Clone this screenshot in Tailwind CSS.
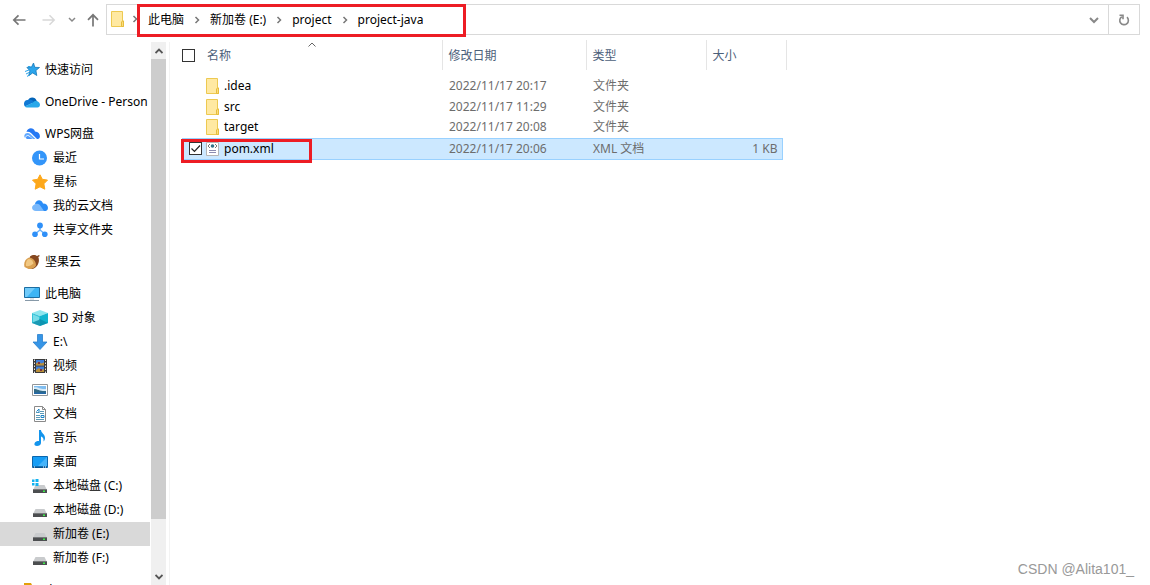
<!DOCTYPE html>
<html lang="zh-CN">
<head>
    <meta charset="UTF-8">
    <meta name="viewport" content="width=device-width, initial-scale=1.0">
    <title>project-java</title>
    <script src="https://cdn.jsdelivr.net/npm/@tailwindcss/browser@4"></script>
</head>
<body class="relative flex h-screen flex-col overflow-hidden bg-white font-['Noto_Sans','Noto_Sans_CJK_SC',sans-serif] text-xs text-black">

    <!-- shared icons -->
    <svg class="hidden">
        <symbol id="folder" viewBox="0 0 14 16">
            <path d="M.5.5h11v9.5h1v5.5H.5z" fill="#ffe9a2" stroke="#edc951"/>
            <path d="M10.500 15.500v-4.500l1-1h1v5.500z" fill="#fbdc7e" stroke="#e6bd3c"/>
        </symbol>
        <symbol id="drive" viewBox="0 0 16 16">
            <path d="M3.500 7h9l2 4h-13z" fill="#c9cbcd"/>
            <path d="M1 11h14v4H1z" fill="#4c4e50"/>
            <path d="M1 11h14v1H1z" fill="#77797b"/>
            <path d="M11 12.500h2v1.500h-2z" fill="#3df04a"/>
        </symbol>
        <symbol id="chevron" viewBox="0 0 8 8">
            <path d="M2.500 1L5.500 4l-3 3" fill="none" stroke="#777" stroke-width="1.500"/>
        </symbol>
    </svg>

    <header class="flex h-10 shrink-0 items-start pt-1 pr-2.5 pl-3">
        <div class="flex h-8 w-[94px] shrink-0 items-center">
            <button type="button" aria-label="后退">
                <svg class="size-3.5" viewBox="0 0 14 14" fill="none" stroke="#777" stroke-width="1.700"><path d="M13.500 7H2M6.500 2.300L1.800 7l4.700 4.700"/></svg>
            </button>
            <button type="button" aria-label="前进" class="ml-4">
                <svg class="size-3.5" viewBox="0 0 14 14" fill="none" stroke="#d8d8d8" stroke-width="1.500"><path d="M.5 7H12M7.500 2.300L12.200 7l-4.700 4.700"/></svg>
            </button>
            <button type="button" aria-label="最近浏览的位置" class="ml-3">
                <svg class="size-2" viewBox="0 0 8 8" fill="none" stroke="#888" stroke-width="1.500"><path d="M1 2l3 3 3-3"/></svg>
            </button>
            <button type="button" aria-label="上移" class="ml-2.5">
                <svg class="size-3.5" viewBox="0 0 14 14" fill="none" stroke="#777" stroke-width="1.700"><path d="M7 13.500V2M2 6.800L7 1.800l5 5"/></svg>
            </button>
        </div>
        <div class="flex h-[31px] grow items-stretch border border-[#d9d9d9]">
            <svg class="mt-1.5 ml-1 h-4 w-3.5 shrink-0"><use href="#folder"/></svg>
            <svg class="mt-2.5 ml-1.5 size-2 shrink-0"><use href="#chevron"/></svg>
            <nav aria-label="地址" class="relative -ml-0.5 w-[329px]">
                <ol class="flex h-[29px] items-center gap-[9px] pl-[11px]">
                    <li><a href="#">此电脑</a></li>
                    <li><svg class="size-2"><use href="#chevron"/></svg></li>
                    <li><a href="#">新加卷 (E:)</a></li>
                    <li><svg class="size-2"><use href="#chevron"/></svg></li>
                    <li><a href="#">project</a></li>
                    <li><svg class="size-2"><use href="#chevron"/></svg></li>
                    <li><a href="#">project-java</a></li>
                </ol>
                <div class="pointer-events-none absolute inset-x-0 -top-px h-[33px] border-3 border-[#ed1c24]"></div>
            </nav>
            <button type="button" aria-label="以前的位置" class="ml-auto flex w-7 items-center justify-center">
                <svg class="size-2.5" viewBox="0 0 10 10" fill="none" stroke="#888" stroke-width="2"><path d="M1 3l4 4 4-4"/></svg>
            </button>
            <button type="button" aria-label="刷新" class="flex w-[31px] items-center justify-center border-l border-[#d9d9d9]">
                <svg class="size-3" viewBox="0 0 12 12" fill="none" stroke="#888" stroke-width="1.600"><path d="M9 3.200A4.300 4.300 0 1 1 3.800 2.700M1.500 1.300H5v4"/></svg>
            </button>
        </div>
    </header>

    <div class="flex min-h-0 grow">
        <nav aria-label="导航窗格" class="mt-0.5 w-[150px] shrink-0 overflow-hidden pt-4 whitespace-nowrap">
            <a href="#" class="flex h-6 items-center gap-[5px] pl-6">
                <svg class="size-4 shrink-0" viewBox="0 0 16 16"><path d="M9.500 1l1.300 4.300 4.700.2-3.600 3 .9 5-4.100-2.600-4 2.900 1.200-5-3-3.400 4.600-.3z" fill="#2ba5ec" stroke="#1777b8" stroke-width=".8"/><path d="M1 9.500l4-1.500M2 12l3-1.500M3 14.500l2-1.500M4 4.500h2.500" stroke="#2ba5ec"/></svg>
                快速访问
            </a>
            <a href="#" class="mt-2 flex h-6 items-center gap-[5px] pl-6">
                <svg class="size-4 shrink-0" viewBox="0 0 16 16"><path d="M4 6.500a4.500 4.500 0 0 1 8.500 0L14 9H4z" fill="#0364b8"/><path d="M3.500 6C0 6-1 10.500 1 12.500L10 8.300A5 5 0 0 0 3.500 6z" fill="#0f78d4"/><path d="M9 8.500c2-2.500 6.500-1.500 7 2 0 2-1 3-2.500 3H3c-1 0-1.700-.4-2.200-1z" fill="#28a8ea"/></svg>
                OneDrive - Person
            </a>
            <a href="#" class="mt-2 flex h-6 items-center gap-[5px] pl-6">
                <svg class="size-4 shrink-0" viewBox="0 0 16 16"><path d="M2.500 6C3.500 1.500 9.500 1 11 5.500c4 .2 5.500 3.500 4.700 6-.5 1-1.500 1.500-2.700 1.500L7 7C5.500 5.800 4 5.500 2.500 6z" fill="#2478f4"/><path d="M.5 9c.7-2.500 4-2.700 5.700-1l5.300 5H9L5 9.500c-2-1-4 .5-3.500 2.500C.3 11.500 0 10 .5 9z" fill="#62aaff"/><path d="M3.500 10c1.200-.2 2 .5 5 3H3.500c-2 0-2-2.700 0-3z" fill="#4c98fb"/></svg>
                WPS网盘
            </a>
            <a href="#" class="flex h-6 items-center gap-[5px] pl-8">
                <svg class="size-4 shrink-0" viewBox="0 0 16 16"><circle cx="7.500" cy="8" r="7.500" fill="#3395f9"/><path d="M7.500 4v5H12" fill="none" stroke="#fff" stroke-width="1.200"/></svg>
                最近
            </a>
            <a href="#" class="flex h-6 items-center gap-[5px] pl-8">
                <svg class="size-4 shrink-0" viewBox="0 0 16 16"><path d="M8 .8l2.300 4.500 5.200.8-3.600 3.700.9 5.400L8 12.800l-4.800 2.400.9-5.400L.5 6.100l5.200-.8z" fill="#fda81b" stroke="#fda81b" stroke-linejoin="round"/></svg>
                星标
            </a>
            <a href="#" class="flex h-6 items-center gap-[5px] pl-8">
                <svg class="size-4 shrink-0" viewBox="0 0 16 16"><path d="M3 6C4 1.500 9.500 1 11 5.500c4 0 5.500 3 4.800 5.500-.5 1.500-1.500 2-2.800 2h-2z" fill="#2b8df7"/><path d="M4 6c2-.5 3.500.5 4.500 2l3.500 5H4C-1 13-1.500 7 4 6z" fill="#79b8fb"/></svg>
                我的云文档
            </a>
            <a href="#" class="flex h-6 items-center gap-[5px] pl-8">
                <svg class="size-4 shrink-0" viewBox="0 0 16 16" fill="#2f90f8"><path d="M8 4v4l-5 4M8 8l5 4" fill="none" stroke="#67b0fa" stroke-width="1.500"/><circle cx="8" cy="3.500" r="2.900"/><circle cx="3" cy="12.200" r="2.800"/><circle cx="12.800" cy="12.200" r="2.800"/></svg>
                共享文件夹
            </a>
            <a href="#" class="mt-2 flex h-6 items-center gap-[5px] pl-6">
                <svg class="size-4 shrink-0" viewBox="0 0 16 16"><path d="M6 2.500c3-2.500 6-1.500 7-.5l2-1 .8 1-1.500 1c2 5-1 10.500-5.800 12L4 14z" fill="#85471f"/><path d="M5 3.500c4 .5 7 3.500 7 8-1.500 2.500-4 4-7.500 3.500L.5 13c-1-4 .5-8 4.500-9.500z" fill="#d99f50"/><path d="M4.500 5C7 5 9 7 9.500 9.500c-2 2-5 3-7.500 2.500C1.500 9 2.500 6 4.500 5z" fill="#f1c883"/></svg>
                坚果云
            </a>
            <a href="#" class="mt-2 flex h-6 items-center gap-[5px] pl-6">
                <svg class="size-4 shrink-0" viewBox="0 0 16 16"><path d="M.5 1.500h15v10H.5z" fill="#3cb4f4" stroke="#1c6da1"/><path d="M1 2h10L3 11H1z" fill="#71cbfa"/><path d="M6 12h4v2H6z" fill="#dde3e7"/><path d="M1 14.500h14" stroke="#8799a8"/></svg>
                此电脑
            </a>
            <a href="#" class="flex h-6 items-center gap-[5px] pl-8">
                <svg class="size-4 shrink-0" viewBox="0 0 16 16"><path d="M0 3l8-3 8 3-8 3z" fill="#8ee6ee"/><path d="M0 3l8 3v10l-8-3z" fill="#35c3d8"/><path d="M16 3L8 6v10l8-3z" fill="#12b5cf"/><path d="M0 13l8-4 8 4-8 3z" fill="#087f9d" fill-opacity=".6"/><path d="M1 4.500l6 2.500v3L1 12z" fill="#a4edf3" fill-opacity=".6"/></svg>
                3D 对象
            </a>
            <a href="#" class="flex h-6 items-center gap-[5px] pl-8">
                <svg class="size-4 shrink-0" viewBox="0 0 16 16"><path d="M5.500.5h5V8h4.500L8 15.500 1 8h4.500z" fill="#3695e6" stroke="#2980cd" stroke-width=".8"/></svg>
                E:\
            </a>
            <a href="#" class="flex h-6 items-center gap-[5px] pl-8">
                <svg class="size-4 shrink-0" viewBox="0 0 16 16"><path d="M1 1h14v14H1z" fill="#3a3a3a"/><path d="M2.500 1.500v14M13.500 1.500v14" stroke="#e8e8e8" stroke-width="1" stroke-dasharray="1.500 1.500"/><path d="M4 2h8v5.500H4zM4 8.500h8V14H4z" fill="#3f7fdc"/><path d="M4 5.500l3-2 2 2 3-1v3H4zM4 12l3-2 2 2 3-1v3H4z" fill="#b98f3a"/><path d="M6 4h2v2H6zM8 11h2v2H8z" fill="#7c3340"/></svg>
                视频
            </a>
            <a href="#" class="flex h-6 items-center gap-[5px] pl-8">
                <svg class="size-4 shrink-0" viewBox="0 0 16 16"><path d="M.5 2.500h15v11H.5z" fill="#fff" stroke="#929699"/><path d="M2 4h12v8H2z" fill="#7fbdf0"/><path d="M2 5.500c4-1 5 2 12 1.500V10H2z" fill="#d7ebf8"/><path d="M2 7c4 0 6 2.500 12 2v3H2z" fill="#326a86"/><path d="M2 10.500h12V12H2z" fill="#2368a8"/></svg>
                图片
            </a>
            <a href="#" class="flex h-6 items-center gap-[5px] pl-8">
                <svg class="size-4 shrink-0" viewBox="0 0 16 16"><path d="M2.500.5h8l3 3v12h-11z" fill="#fff" stroke="#8a8a8a"/><path d="M10.500.5v3h3" fill="none" stroke="#8a8a8a"/><path d="M4 6.500h3M8 5.500h4M8 7.500h4M4 9.500h4M4 11.500h4M4 13.500h8" stroke="#5a9ab8"/><path d="M4.500 5.500L7 3v4M9 9.500h3v2H9z" fill="none" stroke="#1b83c5"/></svg>
                文档
            </a>
            <a href="#" class="flex h-6 items-center gap-[5px] pl-8">
                <svg class="size-4 shrink-0" viewBox="0 0 16 16"><path d="M7 0h2c0 3 4 4 4 8 0 1.500-.5 2.500-1.500 3.500C12 8 10.500 7 9 6.500V13c0 2-2 3-4 3s-3-1-2.500-2.500C3 11.500 5 11 7 11z" fill="#1394ec"/></svg>
                音乐
            </a>
            <a href="#" class="flex h-6 items-center gap-[5px] pl-8">
                <svg class="size-4 shrink-0" viewBox="0 0 16 16"><path d="M.5 2.500h15v11H.5z" fill="#169df5" stroke="#0b66ad"/><path d="M15 3v9H6z" fill="#46b4fa"/><path d="M1 13h14" stroke="#073f70"/><path d="M2 13h1M11 13h1M13 13h1" stroke="#fff"/></svg>
                桌面
            </a>
            <a href="#" class="flex h-6 items-center gap-[5px] pl-8">
                <svg class="size-4 shrink-0" viewBox="0 0 16 16"><use href="#drive"/><path d="M0 1.500h2.500V4H0zM3.500 1H6.500v3h-3zM0 5h2.500v2.500H0zM3.500 5H6.500v3h-3z" fill="#12b2f0"/></svg>
                本地磁盘 (C:)
            </a>
            <a href="#" class="flex h-6 items-center gap-[5px] pl-8">
                <svg class="size-4 shrink-0"><use href="#drive"/></svg>
                本地磁盘 (D:)
            </a>
            <a href="#" aria-current="true" class="flex h-6 items-center gap-[5px] bg-[#d9d9d9] pl-8">
                <svg class="size-4 shrink-0"><use href="#drive"/></svg>
                新加卷 (E:)
            </a>
            <a href="#" class="flex h-6 items-center gap-[5px] pl-8">
                <svg class="size-4 shrink-0"><use href="#drive"/></svg>
                新加卷 (F:)
            </a>
            <a href="#" class="mt-2 flex h-6 items-center gap-[5px] pl-6">
                <svg class="size-4 shrink-0" viewBox="0 0 16 16"><path d="M0 1h7l1 2h8v12H0z" fill="#e3a008"/></svg>
                docs
            </a>
        </nav>

        <!-- sidebar scrollbar -->
        <div class="mt-0.5 ml-px flex w-[15px] shrink-0 flex-col bg-[#f0f0f0]">
            <button type="button" aria-label="向上滚动" class="flex h-[17px] items-center justify-center">
                <svg class="size-2" viewBox="0 0 8 8" fill="none" stroke="#555" stroke-width="1.800"><path d="M.5 6L4 2.500 7.500 6"/></svg>
            </button>
            <div class="h-[460px] bg-[#cdcdcd]"></div>
            <button type="button" aria-label="向下滚动" class="mt-auto flex h-[17px] items-center justify-center">
                <svg class="size-2" viewBox="0 0 8 8" fill="none" stroke="#555" stroke-width="1.800"><path d="M.5 2L4 5.500 7.500 2"/></svg>
            </button>
        </div>

        <main class="mt-0.5 ml-[3px] grow border-l border-[#f3f3f3] pl-3">
            <table class="-mt-0.5 w-[604px] table-fixed border-collapse text-left">
                <colgroup>
                    <col class="w-[260px]">
                    <col class="w-36">
                    <col class="w-30">
                    <col class="w-[76px]">
                    <col class="w-1">
                </colgroup>
                <thead>
                    <tr class="h-[30px] text-[#4c607a]">
                        <th scope="col" class="relative p-0 font-normal">
                            <svg class="absolute top-0.5 left-1/2 h-1.5 w-2 -translate-x-1/2" viewBox="0 0 8 6" fill="none" stroke="#666"><path d="M.5 4.500L4 1l3.500 3.500"/></svg>
                            <label class="flex items-center gap-3">
                                <input type="checkbox" class="size-[13px] appearance-none border border-[#333] bg-white">
                                <span class="pt-0.5">名称</span>
                            </label>
                        </th>
                        <th scope="col" class="border-l border-[#e5e5e5] p-0 pt-0.5 pl-1.5 font-normal">修改日期</th>
                        <th scope="col" class="border-l border-[#e5e5e5] p-0 pt-0.5 pl-1.5 font-normal">类型</th>
                        <th scope="col" class="border-l border-[#e5e5e5] p-0 pt-0.5 pl-1.5 font-normal">大小</th>
                        <td class="border-r border-[#e5e5e5] p-0"></td>
                    </tr>
                </thead>
                <tbody class="text-[#6d6d6d]">
                    <tr class="h-[5px]"><td colspan="5" class="p-0"></td></tr>
                    <tr class="h-[21px]">
                        <td class="p-0 pl-6 text-black"><a href="#" class="flex items-center gap-1"><svg class="h-4 w-3.5"><use href="#folder"/></svg>.idea</a></td>
                        <td class="p-0 pl-[7px]">2022/11/17 20:17</td>
                        <td class="p-0 pl-[7px]">文件夹</td>
                        <td class="p-0"></td>
                    </tr>
                    <tr class="h-[21px]">
                        <td class="p-0 pl-6 text-black"><a href="#" class="flex items-center gap-1"><svg class="h-4 w-3.5"><use href="#folder"/></svg>src</a></td>
                        <td class="p-0 pl-[7px]">2022/11/17 11:29</td>
                        <td class="p-0 pl-[7px]">文件夹</td>
                        <td class="p-0"></td>
                    </tr>
                    <tr class="h-[21px]">
                        <td class="p-0 pl-6 text-black"><a href="#" class="flex items-center gap-1"><svg class="h-4 w-3.5"><use href="#folder"/></svg>target</a></td>
                        <td class="p-0 pl-[7px]">2022/11/17 20:08</td>
                        <td class="p-0 pl-[7px]">文件夹</td>
                        <td class="p-0"></td>
                    </tr>
                    <tr class="h-[21px]">
                        <td class="relative border-y border-[#99d1ff] bg-[#cce8ff] p-0 pl-[7px] text-black">
                            <div class="flex items-center">
                                <span class="relative flex">
                                    <input type="checkbox" checked aria-label="选择 pom.xml" class="size-[13px] appearance-none border border-[#333] bg-white">
                                    <svg class="pointer-events-none absolute inset-0 size-[13px]" viewBox="0 0 13 13" fill="none" stroke="#222" stroke-width="1.200"><path d="M2.500 6.500l3 3 5.500-6"/></svg>
                                </span>
                                <a href="#" class="ml-1 flex items-center gap-1">
                                    <svg class="h-4 w-3.5" viewBox="0 0 14 16"><path d="M.5 1.500h12v13H.5z" fill="#fff" stroke="#b5b5b5"/><path d="M4 3L2 5l2 2M9 3l2 2-2 2" fill="none" stroke="#777"/><circle cx="6.500" cy="5" r="1.800" fill="#2f7187"/><path d="M3 9.500h7M3 11.500h7" stroke="#8c8cb0"/></svg>
                                    pom.xml
                                </a>
                            </div>
                            <div class="pointer-events-none absolute top-0 -left-px h-6 w-[131px] border-3 border-[#ed1c24]"></div>
                        </td>
                        <td class="border-y border-[#99d1ff] bg-[#cce8ff] p-0 pl-[7px]">2022/11/17 20:06</td>
                        <td class="border-y border-[#99d1ff] bg-[#cce8ff] p-0 pl-[7px]">XML 文档</td>
                        <td class="border-y border-r border-[#99d1ff] bg-[#cce8ff] p-0 pr-1 text-right">1 KB</td>
                    </tr>
                </tbody>
            </table>
        </main>
    </div>

    <p class="absolute right-4 bottom-1.5 font-['Liberation_Sans',sans-serif] text-sm text-[#999]">CSDN @Alita101_</p>
</body>
</html>
